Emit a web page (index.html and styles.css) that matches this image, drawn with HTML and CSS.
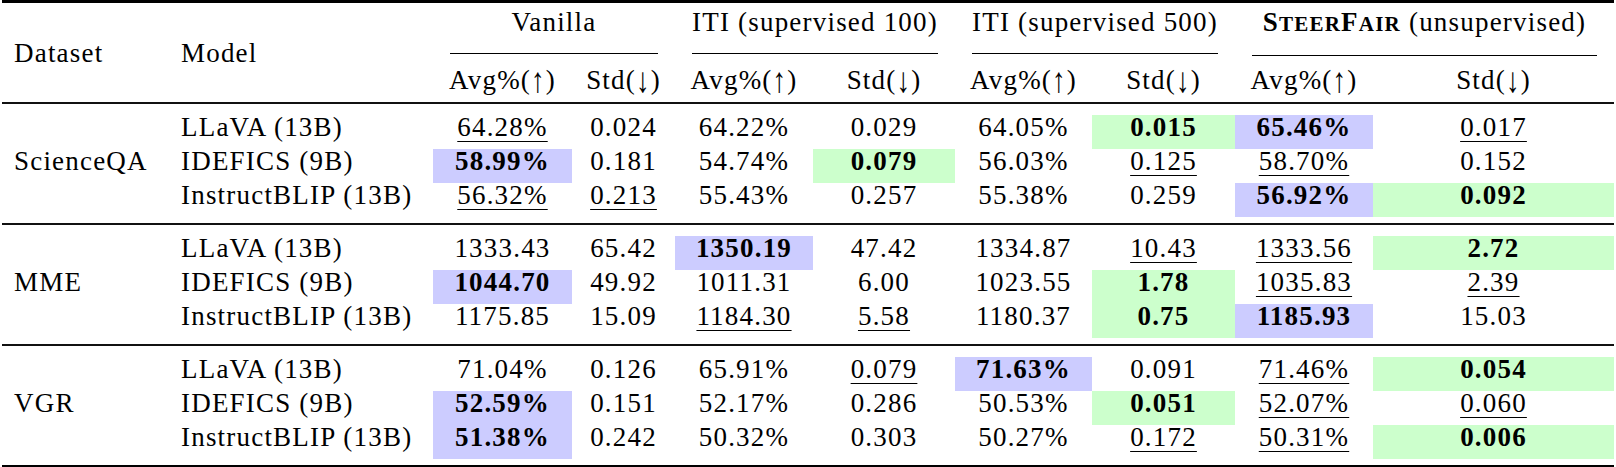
FILE: index.html
```html
<!DOCTYPE html>
<html lang="en">
<head>
<meta charset="utf-8">
<title>SteerFair results table</title>
<link rel="stylesheet" href="styles.css">
</head>
<body>
<div class="table">
  <div class="rule rule-top"></div>

  <div class="hlabel">Dataset</div>
  <div class="hlabel">Model</div>
  <div class="group">Vanilla</div>
  <div class="group">ITI (supervised 100)</div>
  <div class="group">ITI (supervised 500)</div>
  <div class="group"><b>S<span class="sc">TEER</span>F<span class="sc">AIR</span></b> (unsupervised)</div>
  <div class="sub">Avg%(<span class="arr">↑</span>)</div><div class="sub">Std(<span class="arr">↓</span>)</div>
  <div class="sub">Avg%(<span class="arr">↑</span>)</div><div class="sub">Std(<span class="arr">↓</span>)</div>
  <div class="sub">Avg%(<span class="arr">↑</span>)</div><div class="sub">Std(<span class="arr">↓</span>)</div>
  <div class="sub">Avg%(<span class="arr">↑</span>)</div><div class="sub">Std(<span class="arr">↓</span>)</div>

  <div class="rule rule-head"></div>

  <div class="ds">ScienceQA</div>
  <div class="model">LLaVA (13B)</div>
  <div class="c"><span class="ul">64.28%</span></div>
  <div class="c">0.024</div>
  <div class="c">64.22%</div>
  <div class="c">0.029</div>
  <div class="c">64.05%</div>
  <div class="c hg"><b>0.015</b></div>
  <div class="c hb"><b>65.46%</b></div>
  <div class="c"><span class="ul">0.017</span></div>

  <div class="model">IDEFICS (9B)</div>
  <div class="c hb"><b>58.99%</b></div>
  <div class="c">0.181</div>
  <div class="c">54.74%</div>
  <div class="c hg"><b>0.079</b></div>
  <div class="c">56.03%</div>
  <div class="c"><span class="ul">0.125</span></div>
  <div class="c"><span class="ul">58.70%</span></div>
  <div class="c">0.152</div>

  <div class="model">InstructBLIP (13B)</div>
  <div class="c"><span class="ul">56.32%</span></div>
  <div class="c"><span class="ul">0.213</span></div>
  <div class="c">55.43%</div>
  <div class="c">0.257</div>
  <div class="c">55.38%</div>
  <div class="c">0.259</div>
  <div class="c hb"><b>56.92%</b></div>
  <div class="c hg"><b>0.092</b></div>

  <div class="rule rule-group"></div>

  <div class="ds">MME</div>
  <div class="model">LLaVA (13B)</div>
  <div class="c">1333.43</div>
  <div class="c">65.42</div>
  <div class="c hb"><b>1350.19</b></div>
  <div class="c">47.42</div>
  <div class="c">1334.87</div>
  <div class="c"><span class="ul">10.43</span></div>
  <div class="c"><span class="ul">1333.56</span></div>
  <div class="c hg"><b>2.72</b></div>

  <div class="model">IDEFICS (9B)</div>
  <div class="c hb"><b>1044.70</b></div>
  <div class="c">49.92</div>
  <div class="c">1011.31</div>
  <div class="c">6.00</div>
  <div class="c">1023.55</div>
  <div class="c hg"><b>1.78</b></div>
  <div class="c"><span class="ul">1035.83</span></div>
  <div class="c"><span class="ul">2.39</span></div>

  <div class="model">InstructBLIP (13B)</div>
  <div class="c">1175.85</div>
  <div class="c">15.09</div>
  <div class="c"><span class="ul">1184.30</span></div>
  <div class="c"><span class="ul">5.58</span></div>
  <div class="c">1180.37</div>
  <div class="c hg"><b>0.75</b></div>
  <div class="c hb"><b>1185.93</b></div>
  <div class="c">15.03</div>

  <div class="rule rule-group"></div>

  <div class="ds">VGR</div>
  <div class="model">LLaVA (13B)</div>
  <div class="c">71.04%</div>
  <div class="c">0.126</div>
  <div class="c">65.91%</div>
  <div class="c"><span class="ul">0.079</span></div>
  <div class="c hb"><b>71.63%</b></div>
  <div class="c">0.091</div>
  <div class="c"><span class="ul">71.46%</span></div>
  <div class="c hg"><b>0.054</b></div>

  <div class="model">IDEFICS (9B)</div>
  <div class="c hb"><b>52.59%</b></div>
  <div class="c">0.151</div>
  <div class="c">52.17%</div>
  <div class="c">0.286</div>
  <div class="c">50.53%</div>
  <div class="c hg"><b>0.051</b></div>
  <div class="c"><span class="ul">52.07%</span></div>
  <div class="c"><span class="ul">0.060</span></div>

  <div class="model">InstructBLIP (13B)</div>
  <div class="c hb"><b>51.38%</b></div>
  <div class="c">0.242</div>
  <div class="c">50.32%</div>
  <div class="c">0.303</div>
  <div class="c">50.27%</div>
  <div class="c"><span class="ul">0.172</span></div>
  <div class="c"><span class="ul">50.31%</span></div>
  <div class="c hg"><b>0.006</b></div>

  <div class="rule rule-bottom"></div>
</div>
</body>
</html>
```
FILE: styles.css
```css
html, body {
  margin: 0;
  padding: 0;
  background: #ffffff;
}

body {
  color: #000000;
  font-family: "Liberation Serif", "Times New Roman", serif;
  font-size: 27px;
  letter-spacing: 1.2px;
  overflow: hidden;
}

.table {
  display: grid;
  grid-template-columns: 167px 264px 139px 103px 138px 142px 137px 143px 138px 241px;
  width: 1612px;
  margin-left: 2px;
}

.table > div {
  white-space: nowrap;
  line-height: 24px;
}

.rule {
  grid-column: 1 / -1;
  height: 2px;
  background: #111111;
}

.rule-top {
  height: 3px;
  background: #000000;
}

.rule-head {
  margin-bottom: 11px;
}

.rule-group {
  margin-top: 6px;
  margin-bottom: 11px;
}

.rule-bottom {
  height: 3px;
  margin-top: 6px;
  background: #000000;
}

.hlabel {
  grid-row: span 2;
  align-self: center;
  padding-left: 12px;
}

.group {
  grid-column: span 2;
  text-align: center;
  padding-top: 7px;
}

.group::after {
  content: "";
  display: block;
  margin: 19px 17px 0;
  border-top: 1px solid #000000;
}

.sub {
  text-align: center;
  padding: 12px 0 10px;
}

.arr {
  display: inline-block;
  transform: scaleY(1.3);
}

.ds {
  grid-row: span 3;
  padding: 34px 0 0 12px;
}

.model {
  padding: 0 0 10px 12px;
}

.c {
  text-align: center;
  padding-bottom: 10px;
}

.hb {
  background: #ccccff;
}

.hg {
  background: #ccffcc;
}

.ul {
  text-decoration: underline;
  text-underline-offset: 5px;
  text-decoration-thickness: 1px;
  text-decoration-skip-ink: none;
}

b {
  font-weight: 700;
}

.sc {
  font-size: 0.78em;
}
```
